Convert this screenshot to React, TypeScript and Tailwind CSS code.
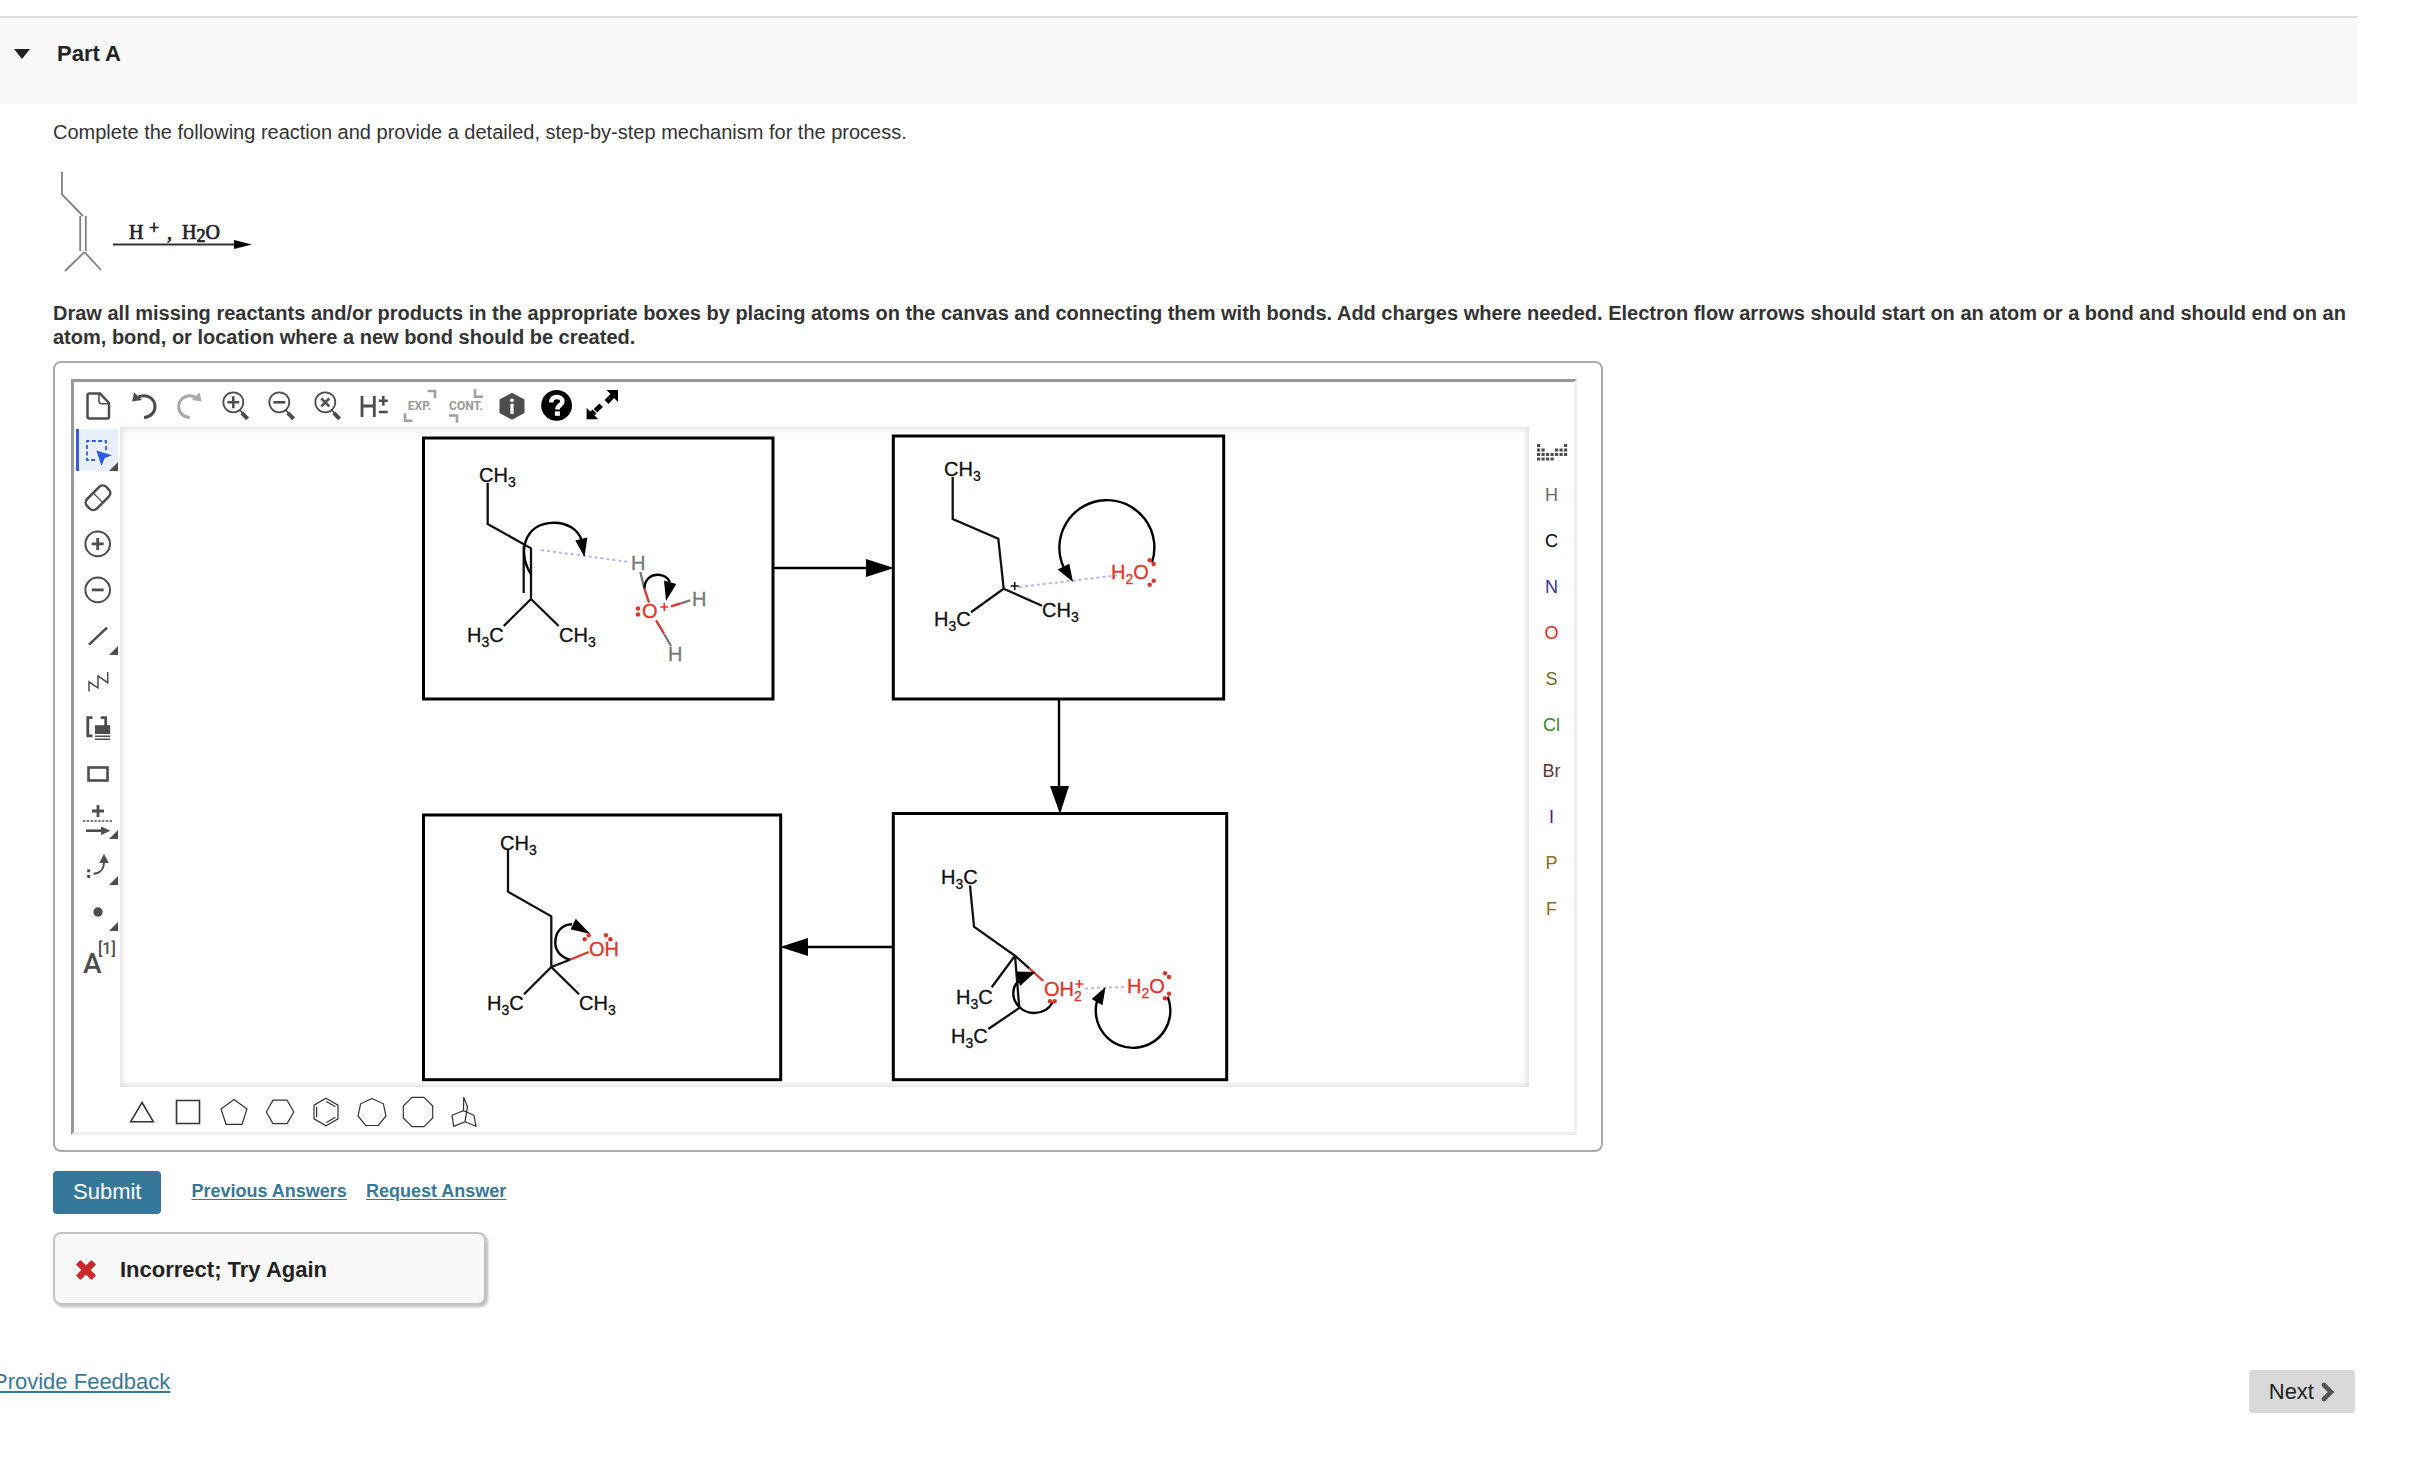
import type { ReactNode } from 'react';

const DARK = '#4d4d4d';
const RED = '#e0342b';
const GREY = '#777777';

const elements = [
  { symbol: 'H', color: 'text-[#6b6b6b]' },
  { symbol: 'C', color: 'text-black' },
  { symbol: 'N', color: 'text-[#3333a0]' },
  { symbol: 'O', color: 'text-[#e02b20]' },
  { symbol: 'S', color: 'text-[#6b6b15]' },
  { symbol: 'Cl', color: 'text-[#2e8b22]' },
  { symbol: 'Br', color: 'text-[#663333]' },
  { symbol: 'I', color: 'text-[#5a0fa0]' },
  { symbol: 'P', color: 'text-[#99661a]' },
  { symbol: 'F', color: 'text-[#99661a]' },
];

const undoArrow = (
  <>
    <path d="M24 35.5C31 35 35 30 35 24.7C35 18.3 30 13.7 24 13.7C21 13.7 18.5 14.6 16.5 16.5" fill="none" stroke="currentColor" strokeWidth="3" />
    <path d="M14.2 10.5L12 19.5L22 18Z" fill="currentColor" />
  </>
);

const magnifier = (
  <>
    <circle cx="21.3" cy="20.3" r="10" fill="none" stroke={DARK} strokeWidth="1.8" />
    <path d="M27.8 28L30.5 31" stroke={DARK} strokeWidth="1.8" />
    <path d="M29.8 30.8L35.6 36.8" stroke={DARK} strokeWidth="4" />
  </>
);

const topTools: { label: string; icon: ReactNode }[] = [
  {
    label: 'New',
    icon: (
      <>
        <path d="M15.5 11.5H26L35 21V34.5Q35 36.5 33 36.5H15.5Q13.5 36.5 13.5 34.5V13.5Q13.5 11.5 15.5 11.5Z" fill="none" stroke={DARK} strokeWidth="2.5" />
        <path d="M25 11.5V19Q25 21.7 28 21.7H35" fill="none" stroke={DARK} strokeWidth="1.6" />
      </>
    ),
  },
  { label: 'Undo', icon: <g color={DARK}>{undoArrow}</g> },
  { label: 'Redo', icon: <g color="#a8a8a8" transform="translate(47.7 0) scale(-1 1)">{undoArrow}</g> },
  {
    label: 'Zoom in',
    icon: <>{magnifier}<path d="M15.3 20.3H27.3M21.3 14.3V26.3" stroke={DARK} strokeWidth="2.6" /></>,
  },
  {
    label: 'Zoom out',
    icon: <>{magnifier}<path d="M15.3 20.3H27.3" stroke={DARK} strokeWidth="2.6" /></>,
  },
  {
    label: 'Reset zoom',
    icon: <>{magnifier}<path d="M17.3 16.3L25.3 24.3M25.3 16.3L17.3 24.3" stroke={DARK} strokeWidth="2.6" /></>,
  },
  {
    label: 'Explicit hydrogens',
    icon: (
      <>
        <path d="M12 14V35M24.3 14V35M12 24H24.3" stroke={DARK} strokeWidth="2.8" fill="none" />
        <path d="M28.8 18.7H37.8M33.3 14V23.4M28.8 30H37.8" stroke={DARK} strokeWidth="2.6" />
      </>
    ),
  },
  {
    label: 'Expand',
    icon: (
      <>
        <path d="M31.6 9H39V16.3M9 31.3V38.7H16.6" fill="none" stroke="#a0a0a0" strokeWidth="2.6" />
        <text x="23.5" y="28" textAnchor="middle" fontFamily="Roboto, sans-serif" fontSize="12" fontWeight="700" fill="#999">EXP.</text>
      </>
    ),
  },
  {
    label: 'Contract',
    icon: (
      <>
        <path d="M33 7V14.7H41M7 33.5H15V40.7" fill="none" stroke="#a0a0a0" strokeWidth="2.6" />
        <text x="24" y="28" textAnchor="middle" fontFamily="Roboto, sans-serif" fontSize="12" fontWeight="700" fill="#999">CONT.</text>
      </>
    ),
  },
  {
    label: 'Info',
    icon: (
      <>
        <path d="M24 10.7L36.5 17.5V31L24 37.8L11.5 31V17.5Z" fill={DARK} />
        <circle cx="24" cy="18.3" r="1.9" fill="#fff" />
        <path d="M24 21.8V32" stroke="#fff" strokeWidth="3.2" />
      </>
    ),
  },
  {
    label: 'Help',
    icon: (
      <>
        <circle cx="22.6" cy="23.4" r="15.4" fill="#000" />
        <path d="M17.2 20.4C17.2 16.8 19.8 15 22.8 15C26 15 28.4 16.8 28.4 19.5C28.4 23.1 23.4 23.2 23.4 27.4" fill="none" stroke="#fff" strokeWidth="4.6" />
        <rect x="20.9" y="29.4" width="5" height="4.4" fill="#fff" />
      </>
    ),
  },
  {
    label: 'Full screen',
    icon: (
      <>
        <path d="M26.5 8H38V20L34 16L28.5 22L24.5 18L30.5 12Z" fill="#000" />
        <path d="M6.6 37.3V26L10.5 29.5L12.5 27.5L16.5 31.5L14.5 33.5L18.3 37.3Z" fill="#000" />
        <path d="M15.5 28.8L21.2 23.2" stroke="#000" strokeWidth="5" />
      </>
    ),
  },
];

const sideTools: { label: string; menu?: boolean; icon: ReactNode }[] = [
  {
    label: 'Select',
    menu: true,
    icon: (
      <>
        <path d="M30 21V12H11V31H19" fill="none" stroke="#2f5be0" strokeWidth="1.8" strokeDasharray="4 2.4" />
        <path d="M20.3 21.5L36 26.3L28.8 29L25.5 37Z" fill="#2f5be0" />
      </>
    ),
  },
  {
    label: 'Erase',
    icon: (
      <g transform="rotate(-45 22 22.8)" fill="none" stroke={DARK}>
        <rect x="8.5" y="16" width="27" height="13.6" rx="5" strokeWidth="2.5" />
        <path d="M22 16V29.6" strokeWidth="1.3" />
      </g>
    ),
  },
  {
    label: 'Increase charge',
    icon: (
      <>
        <circle cx="21.7" cy="22.9" r="12.3" fill="none" stroke={DARK} strokeWidth="2" />
        <path d="M15.7 22.9H27.7M21.7 16.9V28.9" stroke={DARK} strokeWidth="2.8" />
      </>
    ),
  },
  {
    label: 'Decrease charge',
    icon: (
      <>
        <circle cx="21.7" cy="22.9" r="12.3" fill="none" stroke={DARK} strokeWidth="2" />
        <path d="M15.7 22.9H27.7" stroke={DARK} strokeWidth="2.8" />
      </>
    ),
  },
  { label: 'Single bond', menu: true, icon: <path d="M13 31.6L31 14.6" stroke={DARK} strokeWidth="2.6" /> },
  {
    label: 'Chain',
    icon: <path d="M13 32.5V23L22 28.9V17L31.7 23.7V13" fill="none" stroke={DARK} strokeWidth="1.5" />,
  },
  {
    label: 'Bracket',
    icon: (
      <>
        <path d="M16.5 12.7H11.8V30.8H16.5M24.7 12.7H29.7V22" fill="none" stroke={DARK} strokeWidth="2.8" />
        <rect x="19" y="20.2" width="15.2" height="8.8" fill={DARK} />
        <path d="M19 31.3H34.2M19 34.2H34.2" stroke={DARK} strokeWidth="1.5" />
      </>
    ),
  },
  {
    label: 'Rectangle',
    icon: <rect x="12.5" y="16.5" width="19" height="13" fill="none" stroke={DARK} strokeWidth="2.6" />,
  },
  {
    label: 'Reaction arrow',
    menu: true,
    icon: (
      <>
        <path d="M16 14H28M22 8V20" stroke={DARK} strokeWidth="2.8" />
        <path d="M7 24H37.5" stroke={DARK} strokeWidth="1.3" strokeDasharray="2.4 1.4" />
        <path d="M10 33.7H26" stroke={DARK} strokeWidth="2.6" />
        <path d="M25 29.5L34.5 33.7L25 38Z" fill={DARK} />
      </>
    ),
  },
  {
    label: 'Electron flow',
    menu: true,
    icon: (
      <>
        <rect x="11.2" y="26.3" width="3" height="3" fill={DARK} />
        <rect x="11.2" y="32" width="3" height="3" fill={DARK} />
        <path d="M17.5 30.8C24 30.4 28 26 28 19" fill="none" stroke={DARK} strokeWidth="1.9" />
        <path d="M28 11L32.8 20H23.2Z" fill={DARK} />
      </>
    ),
  },
  { label: 'Radical', menu: true, icon: <circle cx="22" cy="23" r="4.7" fill={DARK} /> },
  {
    label: 'Atom map',
    icon: (
      <g fill={DARK} fontFamily="Roboto, sans-serif" fontWeight="500">
        <text x="7" y="38" fontSize="28">A</text>
        <text x="22" y="19" fontSize="16">[1]</text>
      </g>
    ),
  },
];

const ringTools: { label: string; icon: ReactNode }[] = [
  { label: 'Cyclopropane', icon: <path d="M23 15.5L34.3 34.7H11.7Z" strokeWidth="1.6" /> },
  { label: 'Cyclobutane', icon: <path d="M11.5 13.5H34.5V36.5H11.5Z" strokeWidth="1.6" /> },
  { label: 'Cyclopentane', icon: <path d="M23 12.5L36 22L31 37.3H15L10 22Z" /> },
  { label: 'Cyclohexane', icon: <path d="M9.3 25L16 13.2H30L36.8 25L30 36.6H16Z" /> },
  {
    label: 'Benzene',
    icon: <path d="M23 11.3L35 18.2V31.8L23 38.7L11 31.8V18.2ZM13.6 19.8V30.2M23.4 14.5L32.4 19.7M32.4 30.3L23.4 35.5" />,
  },
  { label: 'Cycloheptane', icon: <path d="M23 11.5L34.4 16.8L37 29L29.3 38.5H16.7L9 29L11.6 16.8Z" /> },
  { label: 'Cyclooctane', icon: <path d="M17 10.3H29L37.7 19V31L29 39.6H17L8.3 31V19Z" /> },
  {
    label: 'Bicyclooctane',
    icon: <path d="M22.5 23.7L22.7 10.3L26.5 19.7L24 34.7L12.7 39.3L11 28.3L22.5 23.7L33 28.3L35 39.3L24 34.7" />,
  },
];

// filled squares of the periodic table icon, top row to bottom row per column
const tableColumns = [[0, 1, 2, 3], [1, 2, 3], [2, 3], [2, 3], [1, 2], [1, 2], [0, 1, 2]];

function Formula({ x, y, parts, fill = '#111' }: { x: number; y: number; parts: string[]; fill?: string }) {
  return (
    <text x={x} y={y} fill={fill} stroke={fill} strokeWidth="0.3" fontSize="20">
      {parts.map((part, i) => {
        const sub = /^\d$/.test(part);
        const afterSub = i > 0 && /^\d$/.test(parts[i - 1]);
        return (
          <tspan key={i} fontSize={sub ? 14 : 20} dy={sub ? 5 : afterSub ? -5 : 0}>
            {part}
          </tspan>
        );
      })}
    </text>
  );
}

function Dots({ points }: { points: number[][] }) {
  return (
    <g fill={RED}>
      {points.map(([x, y]) => (
        <circle key={`${x}-${y}`} cx={x} cy={y} r="2.2" />
      ))}
    </g>
  );
}

function Mechanism() {
  return (
    <svg width="1409" height="660" viewBox="0 0 1409 660" fontFamily="'Liberation Sans', Arial, sans-serif" fill="none" stroke="none">
      {/* arrows between the boxes */}
      <g stroke="#000" strokeWidth="2.4">
        <path d="M653 141H750M939 272V362M773 520H685" />
      </g>
      <g fill="#000">
        <path d="M746 132L774 141L746 150Z" />
        <path d="M930 359L940 387L949 359Z" />
        <path d="M688 511L660 520L688 529Z" />
      </g>

      {/* protonation */}
      <g transform="translate(290 -2)">
        <rect x="13.5" y="13" width="349.5" height="261" stroke="#000" strokeWidth="3" />
        <path d="M77.7 58V99L121 123.3V174L93.7 201M121 174L148.7 201M113.7 121V168" stroke="#111" strokeWidth="2.3" />
        <path d="M131 125L219 137" stroke="#b4b4ff" strokeWidth="2" strokeDasharray="3 3" />
        <path d="M121 149C108 130 112 98 144 97.7C158 97.7 168 105 171.5 115" stroke="#000" strokeWidth="2.4" />
        <path d="M165.3 115.5L177.3 112.5L174.5 132Z" fill="#000" />
        <path d="M230.3 147L234.3 163.3M270.7 178.3L280.3 175.3M254 208.7L261 221" stroke={GREY} strokeWidth="2.3" />
        <path d="M234.3 163.3L239 177.7M261 181.3L270.7 178.3M246 195.3L254 208.7" stroke={RED} strokeWidth="2.3" />
        <path d="M234.3 163.3C235 153 242 149.5 248 149.7C254 150 258 153 260 157" stroke="#000" strokeWidth="2.4" />
        <path d="M254 155.5L266.3 159L256 176Z" fill="#000" />
        <Formula x={69} y={57} parts={['CH', '3']} />
        <Formula x={57} y={217} parts={['H', '3', 'C']} />
        <Formula x={149} y={217} parts={['CH', '3']} />
        <Formula x={221} y={145} parts={['H']} fill={GREY} />
        <Formula x={282} y={181} parts={['H']} fill={GREY} />
        <Formula x={258} y={236} parts={['H']} fill={GREY} />
        <Formula x={232} y={193} parts={['O']} fill={RED} />
        <path d="M250.3 182H258.3M254.3 178V186" stroke={RED} strokeWidth="1.7" />
        <Dots points={[[228, 183.5], [228, 189.5]]} />
      </g>

      {/* attack of water on the carbocation */}
      <g transform="translate(760 -2)">
        <rect x="13.3" y="11" width="330.4" height="263" stroke="#000" strokeWidth="3" />
        <path d="M72.7 52V94L118.3 113.7L123.7 163.7L91 187.3M123.7 163.7L162 180.7" stroke="#111" strokeWidth="2.3" />
        <path d="M130.7 161H138.7M134.7 157V165" stroke="#111" strokeWidth="1.6" />
        <path d="M139 162L240 150" stroke="#b4b4ff" strokeWidth="2" strokeDasharray="3 3" />
        <path d="M272 137.5A47.5 47.5 0 1 0 183.5 142" stroke="#000" strokeWidth="2.4" />
        <path d="M177.7 144.5L189.3 138.7L193 157Z" fill="#000" />
        <Formula x={64} y={51} parts={['CH', '3']} />
        <Formula x={54} y={201} parts={['H', '3', 'C']} />
        <Formula x={162} y={192} parts={['CH', '3']} />
        <Formula x={231} y={154} parts={['H', '2', 'O']} fill={RED} />
        <Dots points={[[269.7, 135.3], [273.7, 139], [269.7, 159.7], [273.7, 155.7]]} />
      </g>

      {/* deprotonation of the oxonium ion */}
      <g transform="translate(760 373)">
        <rect x="13.3" y="13.5" width="333.4" height="266.2" stroke="#000" strokeWidth="3" />
        <path d="M90 85.3L94 126.7L135 155.7L111.7 187.3M135 155.7L139.3 208L108.3 229M135 155.7L149.3 168.3" stroke="#111" strokeWidth="2.3" />
        <path d="M149.3 168.3L163.3 181" stroke={RED} strokeWidth="2.3" />
        <path d="M205 188.5L246 187" stroke="#b4b4ff" strokeWidth="2" strokeDasharray="3 3" />
        <path d="M173 202C169 209 162 213 154 213C142 213 133 203 133.3 193C133.3 188 136 183 140 180" stroke="#000" strokeWidth="2.4" />
        <path d="M136 171.5L140 186L155.5 172Z" fill="#000" />
        <path d="M287.7 196.7A37.3 37.3 0 1 1 217 201" stroke="#000" strokeWidth="2.4" />
        <path d="M211.7 199L222.5 205.3L225.5 187Z" fill="#000" />
        <Formula x={61} y={84} parts={['H', '3', 'C']} />
        <Formula x={76} y={204} parts={['H', '3', 'C']} />
        <Formula x={71} y={243} parts={['H', '3', 'C']} />
        <Formula x={164} y={196} parts={['OH', '2']} fill={RED} />
        <path d="M195.3 184H203.3M199.3 180V188" stroke={RED} strokeWidth="1.7" />
        <Formula x={247} y={193} parts={['H', '2', 'O']} fill={RED} />
        <Dots points={[[170, 201.3], [174.7, 201.3], [285, 173.3], [289, 177], [285, 198.3], [289, 193.7]]} />
      </g>

      {/* alcohol product */}
      <g transform="translate(290 373)">
        <rect x="13.5" y="15" width="357.2" height="264.7" stroke="#000" strokeWidth="3" />
        <path d="M98 50V91.7L141.3 116.3V167L114 194.3M141.3 167L169 194.3M141.3 167L160 159.7" stroke="#111" strokeWidth="2.3" />
        <path d="M160 159.7L178.7 152" stroke={RED} strokeWidth="2.3" />
        <path d="M160 159.7C150 157 145.3 150 145.3 142.7C145.3 132 152 124.5 162 124.3" stroke="#000" strokeWidth="2.4" />
        <path d="M165.7 118.7L160.5 129.2L180.5 134Z" fill="#000" />
        <Formula x={90} y={50} parts={['CH', '3']} />
        <Formula x={77} y={210} parts={['H', '3', 'C']} />
        <Formula x={169} y={210} parts={['CH', '3']} />
        <Formula x={179} y={156} parts={['OH']} fill={RED} />
        <Dots points={[[174.7, 139.3], [178.7, 135.3], [196, 135.3], [200.3, 139.3]]} />
      </g>
    </svg>
  );
}

function Reaction() {
  return (
    <svg className="my-3 block" width="210" height="133" viewBox="0 0 210 133">
      <path d="M9 16V38.5L30 60M27.2 60V95M32.8 60V95M31.5 96L12 115M31.5 96L48 114" fill="none" stroke="#808080" strokeWidth="1.8" />
      <path d="M60 88.5H184" stroke="#333" strokeWidth="1.8" />
      <path d="M181 84L199 88.5L181 93Z" fill="#000" />
      <g fontFamily="'Liberation Serif', serif" fontSize="20" fill="#222" stroke="#222" strokeWidth="0.7">
        <text x="76" y="83">H</text>
        <text x="96" y="78" fontSize="18">+</text>
        <text x="114" y="83">,</text>
        <text x="129" y="83">H<tspan fontSize="18" dy="3">2</tspan><tspan dy="-3">O</tspan></text>
      </g>
    </svg>
  );
}

function Editor() {
  return (
    <section className="mt-3 w-fit rounded-lg border-2 border-[#aaaaaa] pt-4 pr-6 pb-[15px] pl-4">
      <div className="border-[3px] border-t-[#999999] border-r-[#eeeeee] border-b-[#eeeeee] border-l-[#999999]">
        <div className="flex h-[45px]">
          {topTools.map((tool) => (
            <button key={tool.label} type="button" aria-label={tool.label} className="w-[46px]">
              <svg width="46" height="45" viewBox="0 0 46 45">{tool.icon}</svg>
            </button>
          ))}
        </div>
        <div className="flex">
          <div className="flex w-[46px] flex-col items-center gap-1 pt-[2px]">
            {sideTools.map((tool, i) => (
              <button
                key={tool.label}
                type="button"
                aria-label={tool.label}
                className={i === 0 ? 'bg-[#e9effb] shadow-[inset_3px_0_0_#2f5be0]' : ''}
              >
                <svg className="overflow-visible" width="42" height="42" viewBox="0 0 42 42">
                  {tool.icon}
                  {tool.menu && <path d="M42 33V42H33Z" fill={DARK} />}
                </svg>
              </button>
            ))}
          </div>
          <div className="shadow-[inset_0_0_6px_2px_#dedede]">
            <Mechanism />
          </div>
          <div className="flex w-[45px] flex-col">
            <button type="button" aria-label="Periodic table" className="flex h-[45px] items-end justify-center pb-[10px]">
              <svg width="32" height="18" viewBox="0 0 32 18" fill={DARK}>
                {tableColumns.map((rows, col) =>
                  rows.map((row) => <rect key={`${col}-${row}`} x={1 + col * 4.5} y={row * 4.5} width="3.2" height="3" />)
                )}
              </svg>
            </button>
            {elements.map((el) => (
              <button key={el.symbol} type="button" className={`h-[46px] text-lg leading-none ${el.color}`}>
                {el.symbol}
              </button>
            ))}
          </div>
        </div>
        <div className="flex h-[45px] pl-[45px]">
          {ringTools.map((tool) => (
            <button key={tool.label} type="button" aria-label={tool.label} className="w-[46px]">
              <svg width="46" height="45" viewBox="0 0 46 45" fill="none" stroke="#333" strokeWidth="1.2">{tool.icon}</svg>
            </button>
          ))}
        </div>
      </div>
    </section>
  );
}

export default function App() {
  return (
    <div className="overflow-hidden bg-white pt-4 pr-[69px] font-['Liberation_Sans',Arial,sans-serif] text-[20px] leading-6 text-[#333333]">
      <header className="flex h-[88px] items-start gap-[27px] border-t-2 border-[#dddddd] bg-[#f9f9f9] pt-[22px] pl-[14px]">
        <button type="button" aria-label="Collapse Part A" className="flex h-[28px] items-center">
          <svg width="16" height="10" viewBox="0 0 16 10"><path d="M0 0H16L8 10Z" fill="#222" /></svg>
        </button>
        <h2 className="text-[22px] leading-[28px] font-bold text-[#222222]">Part A</h2>
      </header>

      <main className="pl-[53px]">
        <p className="mt-4">Complete the following reaction and provide a detailed, step-by-step mechanism for the process.</p>
        <Reaction />
        <p className="font-bold">
          Draw all missing reactants and/or products in the appropriate boxes by placing atoms on the canvas and connecting them with
          bonds. Add charges where needed. Electron flow arrows should start on an atom or a bond and should end on an atom, bond, or
          location where a new bond should be created.
        </p>
        <Editor />

        <div className="mt-[19px] flex items-start text-[18px] font-bold text-[#36789a]">
          <button type="button" className="mr-[30px] h-[43px] rounded bg-[#36789a] px-5 pb-[2px] text-[22px] font-normal text-white">Submit</button>
          <a href="#previous" className="mt-2 mr-[19px] underline underline-offset-2">Previous Answers</a>
          <a href="#request" className="mt-2 underline underline-offset-2">Request Answer</a>
        </div>

        <div className="mt-[18px] flex h-[73px] w-[433px] items-center gap-6 rounded-lg border-2 border-[#c4c4c4] bg-[#f9f9f9] pt-[3px] pl-[21px] shadow-[2px_2px_3px_#bbbbbb]">
          <svg width="20" height="20" viewBox="0 0 20 20">
            <path
              d="M4.5 1.5L10 7L15.5 1.5L18.5 4.5L13 10L18.5 15.5L15.5 18.5L10 13L4.5 18.5L1.5 15.5L7 10L1.5 4.5Z"
              fill="#cc2a2d"
              stroke="#cc2a2d"
              strokeWidth="2.4"
              strokeLinejoin="round"
            />
          </svg>
          <p className="text-[22px] font-bold text-[#222222]">Incorrect; Try Again</p>
        </div>
      </main>

      <footer className="mt-[65px] flex items-start justify-between text-[22px]">
        <a href="#feedback" className="-ml-[7px] text-[#36789a] underline underline-offset-2">Provide Feedback</a>
        <button type="button" className="mr-[2px] flex h-[43px] items-center gap-[7px] rounded bg-[#d9d9d9] px-5 text-[#222222]">
          Next
          <svg width="14" height="20" viewBox="0 0 14 20">
            <path d="M3 3L10 10L3 17" fill="none" stroke="#555" strokeWidth="4.6" strokeLinecap="round" />
          </svg>
        </button>
      </footer>
    </div>
  );
}
